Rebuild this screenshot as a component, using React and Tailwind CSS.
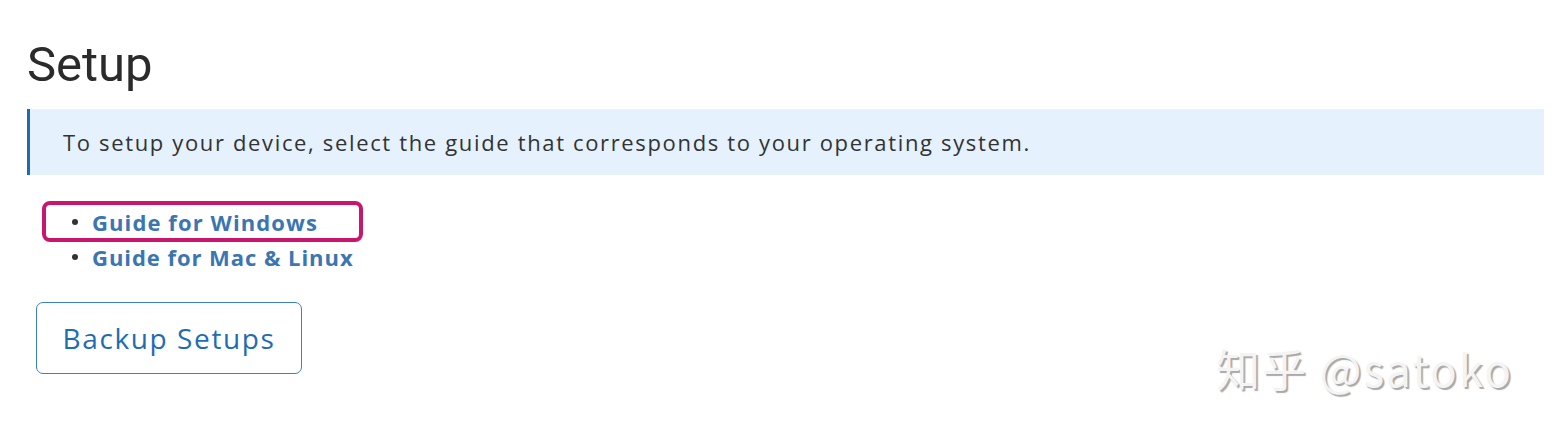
export default function App() {
  return (
    <div className="relative w-[1552px] h-[437px] bg-white overflow-hidden" style={{ fontFamily: '"Open Sans", "Noto Sans", sans-serif' }}>
      <div className="pl-[27px] pr-[8px] pt-[36px]">
        <h1 className="text-[49px] leading-[58px] text-[#2b2b2b] font-normal" style={{ fontFamily: 'Roboto, "Noto Sans", sans-serif' }}>Setup</h1>
        <div className="mt-[15px] h-[66px] flex items-center bg-[#e5f1fc] border-l-[3px] border-[#1c6cb4] pl-[33px]">
          <p className="text-[22px] text-[#333333] tracking-[1.65px]">To setup your device, select the guide that corresponds to your operating system.</p>
        </div>
        <ul className="mt-[26px] ml-[15px] flex flex-col">
          <li className="relative w-[321px] h-[41px] border-[4px] border-[#c8156e] rounded-[8px] flex items-center pl-[26px]">
            <span className="w-[6px] h-[6px] rounded-full bg-[#333] mr-[14px]"></span>
            <a className="text-[22px] font-bold text-[#3b76b2] leading-none tracking-[1.1px]" href="#">Guide for Windows</a>
          </li>
          <li className="h-[30px] flex items-center pl-[30px]">
            <span className="w-[6px] h-[6px] rounded-full bg-[#333] mr-[14px]"></span>
            <a className="text-[22px] font-bold text-[#3b76b2] leading-none tracking-[0.95px]" href="#">Guide for Mac &amp; Linux</a>
          </li>
        </ul>
        <button className="mt-[30px] ml-[9px] w-[266px] h-[72px] border border-[#3d7fbf] rounded-[7px] text-[28px] text-[#1e6db3] tracking-[1.6px] flex items-center justify-center">Backup Setups</button>
      </div>
      <div className="absolute left-[1216px] top-[346px] text-[44px] text-[#f4f4f4] leading-none tracking-[2px]" style={{ fontFamily: '"Noto Sans CJK SC", "Noto Sans", sans-serif', textShadow: '2px 2px 1px #a9a9a9' }}>知乎 @satoko</div>
    </div>
  );
}
